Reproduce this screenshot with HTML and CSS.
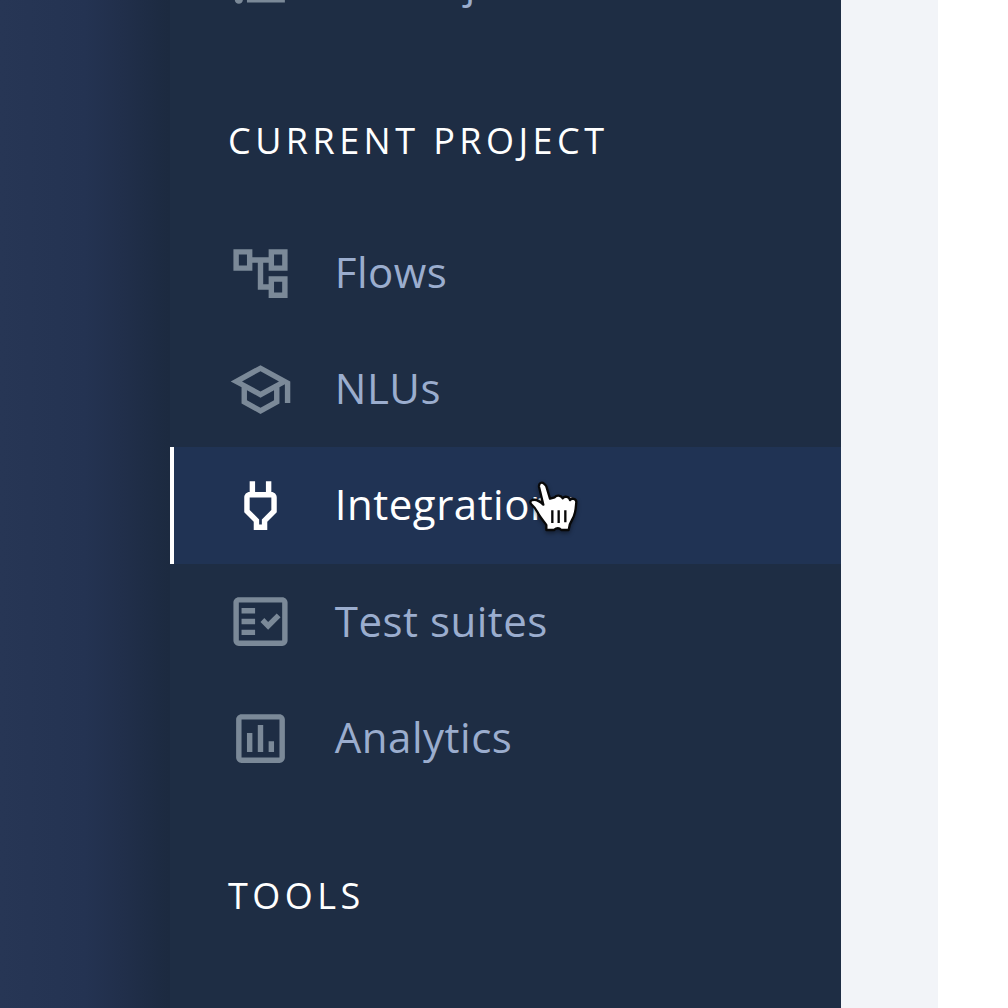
FILE: index.html
```html
<!DOCTYPE html>
<html lang="en">
<head>
  <meta charset="UTF-8" />
  <meta name="viewport" content="width=device-width, initial-scale=1.0" />
  <title>Integrations</title>
  <link rel="stylesheet" href="styles.css">
</head>
<body>
  <div class="app">
    <div class="backdrop"></div>

    <nav class="sidebar">
      <a class="item">
        <svg class="icon" viewBox="0 0 24 24"><path d="M4 10.5c-.83 0-1.5.67-1.5 1.5s.67 1.5 1.5 1.5 1.5-.67 1.5-1.5-.67-1.5-1.5-1.5zm0-6c-.83 0-1.5.67-1.5 1.5S3.17 7.5 4 7.5 5.5 6.83 5.5 6 4.83 4.5 4 4.5zm0 12c-.83 0-1.5.68-1.5 1.5s.68 1.5 1.5 1.5 1.5-.68 1.5-1.5-.67-1.5-1.5-1.5zM7 19h14v-2H7v2zm0-6h14v-2H7v2zm0-8v2h14V5H7z"/></svg>
        <span class="label">All Projects</span>
      </a>

      <h2 class="title">CURRENT PROJECT</h2>
      <a class="item">
        <svg class="icon" viewBox="0 0 24 24"><path fill-rule="evenodd" d="M22 11V3h-7v3H9V3H2v8h7V8h2v10h4v3h7v-8h-7v3h-2V8h2v3h7zM7 9H4V5h3v4zm10 6h3v4h-3v-4zm0-10h3v4h-3V5z"/></svg>
        <span class="label">Flows</span>
      </a>
      <a class="item">
        <svg class="icon" viewBox="0 0 24 24"><path d="M12 3L1 9l4 2.18v6L12 21l7-3.82v-6l2-1.09V17h2V9L12 3zm6.82 6L12 12.72 5.18 9 12 5.28 18.82 9zM17 15.99l-5 2.73-5-2.73v-3.72L12 15l5-2.73v3.72z"/></svg>
        <span class="label">NLUs</span>
      </a>
      <a class="item active">
        <svg class="icon" viewBox="0 0 24 24"><path d="M16 9v4.66l-3.5 3.51V19h-1v-1.83L8 13.65V9h8m0-6h-2v4h-4V3H8v4h-.01C6.9 6.99 6 7.89 6 8.98v5.52L9.5 18v3h5v-3l3.5-3.51V9c0-1.1-.9-2-2-2V3z"/></svg>
        <span class="label">Integrations</span>
        <svg class="cursor" viewBox="0 0 156 168">
          <path d="M48 17C40 10 32 17 33 26L46 80C36 70 24 63 13 66C5 69 5 76 13 82C24 91 27 101 34 112C43 126 51 134 55 141L55 156L78 156Q90 146 100 156L122 156C123 143 126 135 132 126C142 111 144 91 145 72C145 61 130 60 126 66C124 56 110 53 104 61C99 51 86 50 80 58L66 62L55 25Q53 20 48 17Z"/>
          <path class="lines" d="M73 97V135M92 97V135M112 97V133"/>
        </svg>
      </a>
      <a class="item">
        <svg class="icon" viewBox="0 0 24 24"><path d="M20 3H4c-1.1 0-2 .9-2 2v14c0 1.1.9 2 2 2h16c1.1 0 2-.9 2-2V5c0-1.1-.9-2-2-2zm0 16H4V5h16v14z"/><path d="M19.41 10.42L17.99 9l-3.17 3.17-1.41-1.42L12 12.16 14.82 15zM5 7h5v2H5zM5 11h5v2H5zM5 15h5v2H5z"/></svg>
        <span class="label">Test suites</span>
      </a>
      <a class="item">
        <svg class="icon" viewBox="0 0 24 24"><path d="M19 3H5c-1.1 0-2 .9-2 2v14c0 1.1.9 2 2 2h14c1.1 0 2-.9 2-2V5c0-1.1-.9-2-2-2zm0 16H5V5h14v14zM7 10h2v7H7zm4-3h2v10h-2zm4 6h2v4h-2z"/></svg>
        <span class="label">Analytics</span>
      </a>

      <h2 class="title">TOOLS</h2>
    </nav>

    <div class="gutter"></div>
    <main class="content"></main>
  </div>
</body>
</html>
```
FILE: styles.css
```css
* {
  box-sizing: border-box;
}

body {
  margin: 0;
  font-family: "Open Sans", sans-serif;
  background: #fff;
}

.app {
  display: flex;
  height: 100vh;
  overflow: hidden;
}

.backdrop {
  width: 170px;
  background: linear-gradient(to right, #273655 0, #243352 85px, #212f4b 120px, #1c2a40 168px);
}

.sidebar {
  width: 671px;
  margin-top: -75px;
  background: #1e2d44;
}

.item {
  position: relative;
  display: flex;
  align-items: center;
  height: 116.3px;
  padding-left: 57.6px;
  color: #9badce;
}

.icon {
  width: 65px;
  height: 65px;
  margin-right: 42.2px;
  fill: #7b8998;
}

.label {
  padding-bottom: 3.5px;
  font-size: 42px;
  letter-spacing: 0.5px;
}

.item.active {
  padding-left: 53.6px;
  border-left: 4px solid #fff;
  background: #203354;
  color: #fff;
}

.item.active .icon {
  fill: #fff;
}

.title {
  height: 173.6px;
  margin: 0;
  padding: 25.7px 0 0 58px;
  font-size: 36px;
  font-weight: 400;
  line-height: 148px;
  letter-spacing: 4.45px;
  color: #fff;
}

.cursor {
  position: absolute;
  left: 354px;
  top: 31px;
  width: 52px;
  height: 56px;
  overflow: visible;
  fill: #fff;
  stroke: #080808;
  stroke-width: 7;
  stroke-linejoin: round;
  filter: drop-shadow(0 2px 2px rgba(0, 0, 0, 0.4));
}

.cursor .lines {
  fill: none;
}

.gutter {
  width: 97px;
  background: #f2f4f8;
}

.content {
  flex: 1;
}
```
